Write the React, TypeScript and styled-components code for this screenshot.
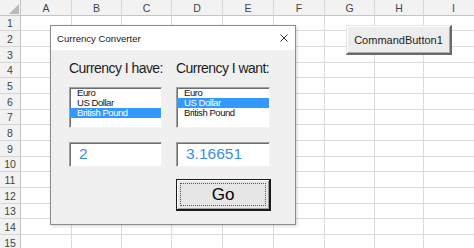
import React from "react";
import styled, { createGlobalStyle } from "styled-components";

const GlobalStyle = createGlobalStyle`
  html, body { margin: 0; padding: 0; background: #ffffff; overflow: hidden; }
  * { box-sizing: border-box; }
`;

const colNames = ["A", "B", "C", "D", "E", "F", "G", "H", "I"];
const colWidths = [51, 50, 50, 51, 51, 51, 50, 49, 60];
const rowHeights = [15, 16, 16, 15, 16, 16, 15, 16, 16, 15, 16, 16, 15, 16, 16];

const Page = styled.div`
  position: relative;
  width: 474px;
  height: 248px;
  overflow: hidden;
  font-family: "Liberation Sans", Arial, sans-serif;
`;

const Sheet = styled.div`
  display: grid;
  grid-template-columns: 21px ${colWidths.map((w) => `${w}px`).join(" ")};
  grid-template-rows: 16px ${rowHeights.map((h) => `${h}px`).join(" ")};
  width: max-content;
`;

const Corner = styled.div`
  background: #f2f2f2;
  border-right: 1px solid #c4c4c4;
  border-bottom: 1px solid #c4c4c4;
  position: relative;
`;

const ColHeader = styled.div`
  background: #f2f2f2;
  border-right: 1px solid #d6d6d6;
  border-bottom: 1px solid #c4c4c4;
  display: flex;
  align-items: center;
  justify-content: center;
  font-size: 10.5px;
  color: #444444;
`;

const RowHeader = styled.div`
  background: #f2f2f2;
  border-right: 1px solid #c4c4c4;
  border-bottom: 1px solid #d6d6d6;
  display: flex;
  align-items: center;
  justify-content: center;
  font-size: 10.5px;
  color: #444444;
`;

const Cell = styled.div`
  border-right: 1px solid #dcdcdc;
  border-bottom: 1px solid #dcdcdc;
  background: #ffffff;
`;

const Dialog = styled.div`
  position: absolute;
  left: 50px;
  top: 25px;
  width: 246px;
  height: 200px;
  border: 1px solid #8c8c8c;
  box-shadow: 1px 1px 3px rgba(0, 0, 0, 0.18);
  display: flex;
  flex-direction: column;
  background: #f0f0f0;
`;

const TitleBar = styled.div`
  height: 24px;
  background: #ffffff;
  display: flex;
  align-items: center;
  justify-content: space-between;
  padding: 0 7px 0 6px;
  font-size: 9.6px;
  color: #1a1a1a;
`;

const DialogBody = styled.div`
  flex: 1;
  display: grid;
  grid-template-columns: 93px 94px;
  column-gap: 14px;
  padding: 10px 0 0 18px;
  align-items: start;
`;

const Column = styled.div`
  display: flex;
  flex-direction: column;
`;

const Label = styled.div`
  font-size: 14px;
  line-height: 17px;
  letter-spacing: -0.55px;
  color: #1c1c1c;
  white-space: nowrap;
`;

const ListBox = styled.div`
  margin-top: 10px;
  height: 41px;
  background: #ffffff;
  border: 1px solid;
  border-color: #a0a0a0 #f4f4f4 #f4f4f4 #a0a0a0;
  box-shadow: inset 1px 1px 0 #6f6f6f;
  display: flex;
  flex-direction: column;
`;

const ListItem = styled.div<{ $selected?: boolean }>`
  height: 10px;
  line-height: 10px;
  padding-left: 7px;
  font-size: 9.5px;
  letter-spacing: -0.45px;
  white-space: nowrap;
  background: ${(p) => (p.$selected ? "#3399ff" : "transparent")};
  color: ${(p) => (p.$selected ? "#ffffff" : "#111111")};
`;

const TextBox = styled.div`
  margin-top: 14px;
  height: 25px;
  background: #ffffff;
  border: 1px solid;
  border-color: #a0a0a0 #f4f4f4 #f4f4f4 #a0a0a0;
  box-shadow: inset 1px 1px 0 #6f6f6f;
  padding: 0 0 1px 9px;
  display: flex;
  align-items: center;
  font-size: 15.5px;
  color: #3a8de4;
`;

const GoButton = styled.button`
  margin-top: 12px;
  height: 32px;
  width: 95px;
  border: 1px solid #1a1a1a;
  border-right-width: 2px;
  border-bottom-width: 2px;
  background: #e6e6e6;
  box-shadow: inset 1px 1px 0 #ffffff, inset -1px -1px 0 #a0a0a0;
  position: relative;
  font-family: "Liberation Sans", Arial, sans-serif;
  font-size: 17px;
  color: #000000;
  padding: 0;
  display: flex;
  align-items: center;
  justify-content: center;
`;

const FocusRing = styled.span`
  position: absolute;
  inset: 3px;
  border: 1px dotted #555555;
  pointer-events: none;
`;

const CommandButton = styled.button`
  position: absolute;
  left: 346px;
  top: 25px;
  width: 106px;
  height: 30px;
  border: 1px solid;
  border-color: #e3e3e3 #6a6a6a #6a6a6a #e3e3e3;
  border-right-width: 2px;
  border-bottom-width: 2px;
  background: #ededed;
  box-shadow: inset 1px 1px 0 #ffffff, inset -1px -1px 0 #a8a8a8;
  font-family: "Liberation Sans", Arial, sans-serif;
  font-size: 11px;
  color: #222222;
  padding: 0;
  display: flex;
  align-items: center;
  justify-content: center;
`;

const CloseIcon = () => (
  <svg width="8" height="8" viewBox="0 0 8 8">
    <path d="M0.5 0.5 L7.5 7.5 M7.5 0.5 L0.5 7.5" stroke="#333333" strokeWidth="1" fill="none" />
  </svg>
);

const CornerTriangle = () => (
  <svg width="21" height="16" viewBox="0 0 21 16" style={{ position: "absolute", left: 0, top: 0 }}>
    <polygon points="19,4 19,14 9,14" fill="#b9b9b9" />
  </svg>
);

const currencies = ["Euro", "US Dollar", "British Pound"];

export default function App() {
  return (
    <Page>
      <GlobalStyle />
      <Sheet>
        <Corner>
          <CornerTriangle />
        </Corner>
        {colNames.map((c) => (
          <ColHeader key={c}>{c}</ColHeader>
        ))}
        {rowHeights.map((_, r) => (
          <React.Fragment key={r}>
            <RowHeader>{r + 1}</RowHeader>
            {colNames.map((c) => (
              <Cell key={c} />
            ))}
          </React.Fragment>
        ))}
      </Sheet>

      <CommandButton>CommandButton1</CommandButton>

      <Dialog>
        <TitleBar>
          <span>Currency Converter</span>
          <CloseIcon />
        </TitleBar>
        <DialogBody>
          <Column>
            <Label>Currency I have:</Label>
            <ListBox>
              {currencies.map((c, i) => (
                <ListItem key={c} $selected={i === 2}>
                  {c}
                </ListItem>
              ))}
            </ListBox>
            <TextBox>2</TextBox>
          </Column>
          <Column>
            <Label>Currency I want:</Label>
            <ListBox>
              {currencies.map((c, i) => (
                <ListItem key={c} $selected={i === 1}>
                  {c}
                </ListItem>
              ))}
            </ListBox>
            <TextBox>3.16651</TextBox>
            <GoButton>
              <FocusRing />
              Go
            </GoButton>
          </Column>
        </DialogBody>
      </Dialog>
    </Page>
  );
}
